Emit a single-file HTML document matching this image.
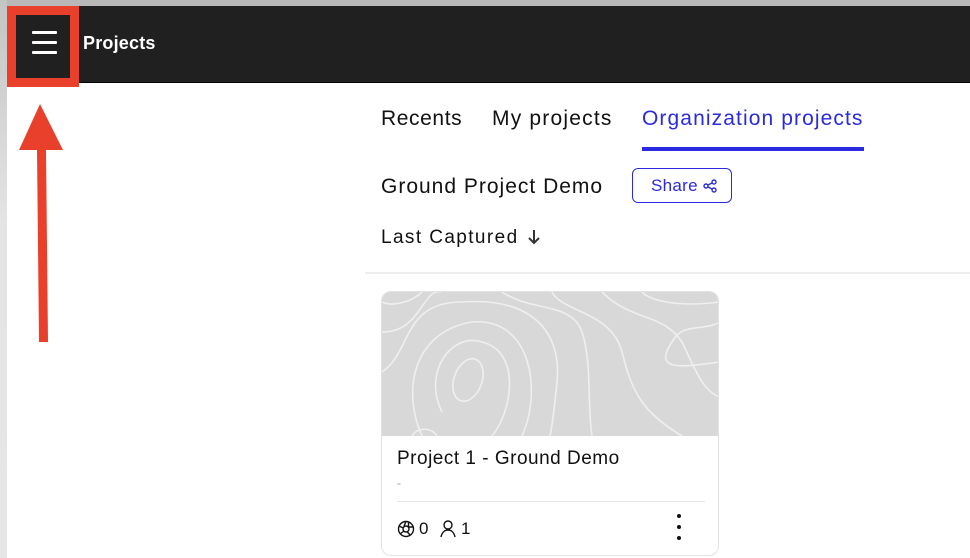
<!DOCTYPE html>
<html><head><meta charset="utf-8"><style>
*{margin:0;padding:0;box-sizing:border-box}
body{width:970px;height:558px;overflow:hidden;background:#fff;font-family:"Liberation Sans",sans-serif;position:relative}
.abs{position:absolute}
</style></head><body>
<div class="abs" style="left:0;top:0;width:970px;height:6px;background:#b8b8b8"></div>
<div class="abs" style="left:0;top:0;width:7px;height:558px;background:linear-gradient(#c4c4c4,#e4e4e4 40%,#e6e6e6)"></div>
<div class="abs" style="left:7px;top:6px;width:963px;height:76px;background:#202020"></div>
<div class="abs" style="left:7px;top:82px;width:963px;height:1px;background:#000"></div>
<div class="abs" style="left:7px;top:6px;width:72px;height:81px;border:9px solid #e8402a"></div>
<div class="abs" style="left:32px;top:31px;width:25px;height:3px;background:#fff;border-radius:1px"></div>
<div class="abs" style="left:32px;top:41px;width:25px;height:3px;background:#fff;border-radius:1px"></div>
<div class="abs" style="left:32px;top:51px;width:25px;height:3px;background:#fff;border-radius:1px"></div>
<div class="abs" style="left:83px;top:33px;color:#fff;font-size:18px;font-weight:bold;letter-spacing:.2px">Projects</div>
<svg class="abs" style="left:0;top:0" width="90" height="360"><polygon points="40,104 19,150 63,150" fill="#e8402a"/><polygon points="37,149 46,149 48,342 39,342" fill="#e8402a"/></svg>

<div class="abs" style="left:381px;top:107px;font-size:21px;color:#111;letter-spacing:.6px">Recents</div>
<div class="abs" style="left:492px;top:107px;font-size:21px;color:#111;letter-spacing:1.2px">My projects</div>
<div class="abs" style="left:642px;top:107px;font-size:21px;color:#2a2ae0;letter-spacing:1.1px">Organization projects</div>
<div class="abs" style="left:642px;top:147px;width:222px;height:4px;background:#2a2ae0"></div>
<div class="abs" style="left:381px;top:175px;font-size:21px;color:#111;letter-spacing:1px">Ground Project Demo</div>
<div class="abs" style="left:632px;top:168px;width:100px;height:35px;border:1px solid #2a2ae0;border-radius:6px;color:#2a2ae0;font-size:17px;padding:7px 0 0 18px;letter-spacing:.3px">Share
<svg style="position:absolute;left:70px;top:10px" width="14" height="14" viewBox="0 0 14 14" fill="none" stroke="#2a2ae0" stroke-width="1.4"><circle cx="3" cy="7" r="2"/><circle cx="11" cy="3" r="2"/><circle cx="11" cy="11" r="2"/><path d="M5 6L9 4M5 8L9 10"/></svg></div>
<div class="abs" style="left:381px;top:227px;font-size:19px;color:#111;letter-spacing:1.4px">Last Captured</div>
<svg class="abs" style="left:527px;top:229px" width="14" height="16" viewBox="0 0 14 16" fill="none" stroke="#333" stroke-width="2"><path d="M7 1V14M2 9L7 14L12 9"/></svg>
<div class="abs" style="left:365px;top:272px;width:605px;height:2px;background:#eee"></div>

<div class="abs" style="left:381px;top:291px;width:338px;height:265px;border:1px solid #e2e2e2;border-radius:10px;overflow:hidden">
<svg width="338" height="144" style="display:block;background:#d8d8d8" fill="none" stroke="#efefef" stroke-width="1.6">
<ellipse cx="86" cy="88" rx="14" ry="22" transform="rotate(20 86 88)"/>
<path d="M60 120C40 80 70 40 100 50C140 60 130 120 110 144"/>
<path d="M40 144C20 100 30 40 90 30C150 25 160 100 140 144"/>
<path d="M0 80C30 60 20 10 80 10C150 5 180 40 175 90C172 120 170 135 168 144"/>
<path d="M0 40C40 40 40 -5 60 0"/>
<path d="M120 0C150 20 190 10 200 40C210 70 205 110 210 144"/>
<path d="M170 0C180 20 230 20 240 60C250 100 260 120 300 144"/>
<path d="M220 0C250 30 280 20 300 50C310 70 320 100 338 105"/>
<path d="M338 70C300 75 270 80 290 50C300 30 320 40 338 30"/>
<path d="M260 0C270 10 300 15 338 10"/>
<path d="M0 10C10 15 30 10 40 0"/>
<path d="M30 144C35 135 50 135 55 144"/>
</svg>
<div style="position:absolute;left:15px;top:156px;font-size:19px;color:#111;letter-spacing:.5px">Project 1 - Ground Demo</div>
<div style="position:absolute;left:15px;top:184px;font-size:12px;color:#999">-</div>
<div style="position:absolute;left:15px;top:209px;width:308px;height:1px;background:#e6e6e6"></div>
<svg style="position:absolute;left:15px;top:228px" width="18" height="18" viewBox="0 0 18 18" fill="none" stroke="#111" stroke-width="1.4"><circle cx="9" cy="9" r="7.5"/><circle cx="9" cy="9" r="3"/><path d="M9 1.5L7 6M16 7L11 7M13 15L10 11.5M3 14L7 11M2 6L6.5 8M11.5 2.5L11.5 7"/></svg>
<div style="position:absolute;left:37px;top:227px;font-size:17px;color:#111">0</div>
<svg style="position:absolute;left:57px;top:227px" width="18" height="20" viewBox="0 0 18 20" fill="none" stroke="#111" stroke-width="1.4"><circle cx="9" cy="6" r="4"/><path d="M2 18C3 13 6 11 9 11C12 11 15 13 16 18"/></svg>
<div style="position:absolute;left:79px;top:227px;font-size:17px;color:#111">1</div>
<div style="position:absolute;left:295px;top:222px;width:4px;height:4px;border-radius:2px;background:#111"></div>
<div style="position:absolute;left:295px;top:233px;width:4px;height:4px;border-radius:2px;background:#111"></div>
<div style="position:absolute;left:295px;top:244px;width:4px;height:4px;border-radius:2px;background:#111"></div>
</div>
</body></html>
